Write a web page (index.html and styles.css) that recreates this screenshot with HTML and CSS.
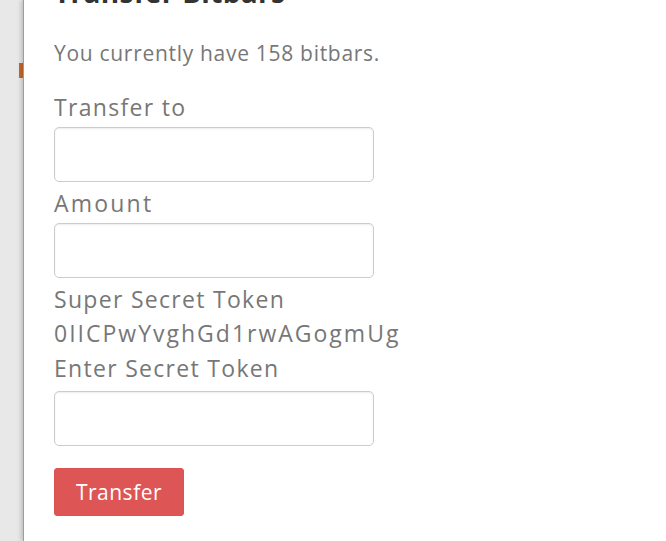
FILE: index.html
```html
<!DOCTYPE html>
<html lang="en">
<head>
<meta charset="utf-8">
<title>Transfer Bitbars</title>
<link rel="stylesheet" href="styles.css">
</head>
<body>
<div class="page">
  <div class="backdrop">
    <span class="behind-mark"></span>
  </div>
  <div class="panel">
    <h2 class="title">Transfer Bitbars</h2>
    <p class="intro">You currently have 158 bitbars.</p>
    <form class="form">
      <label class="label" for="to">Transfer to</label>
      <input class="field" id="to" type="text">
      <label class="label label-wide" for="amount">Amount</label>
      <input class="field" id="amount" type="text">
      <div class="label">Super Secret Token</div>
      <div class="label label-tall token">0IICPwYvghGd1rwAGogmUg</div>
      <label class="label label-tall" for="token">Enter Secret Token</label>
      <input class="field field-spaced" id="token" type="text">
      <div class="actions">
        <button class="btn" type="button">Transfer</button>
      </div>
    </form>
  </div>
</div>
</body>
</html>
```
FILE: styles.css
```css
html, body {
  margin: 0;
  padding: 0;
  height: 100%;
  overflow: hidden;
}
body {
  background: #e8e8e8;
  font-family: "Open Sans", "Liberation Sans", sans-serif;
  color: #777;
}
.page {
  display: flex;
  height: 100%;
}
.backdrop {
  width: 23px;
  flex: none;
  position: relative;
  background: #e8e8e8;
}
.behind-mark {
  position: absolute;
  left: 19px;
  top: 63px;
  width: 5px;
  height: 15px;
  background: #c9692c;
}
.panel {
  flex: 1;
  position: relative;
  z-index: 1;
  background: #fff;
  border-left: 1px solid #9d9d9d;
  box-shadow: -2px 0 4px rgba(0, 0, 0, 0.18);
  padding: 0 30px;
}
.title {
  margin: -25px 0 0;
  font-size: 28px;
  line-height: 34px;
  font-weight: 700;
  color: #333;
  letter-spacing: 0.3px;
}
.intro {
  margin: 27px 0 0;
  font-size: 21px;
  line-height: 34px;
  letter-spacing: 0.7px;
}
.form {
  display: flex;
  flex-direction: column;
  align-items: flex-start;
  margin-top: 20px;
}
.label {
  display: block;
  font-size: 23px;
  line-height: 34px;
  letter-spacing: 1.3px;
  color: #777;
}
.label-wide {
  letter-spacing: 2.2px;
}
.label-tall {
  line-height: 35px;
}
.token {
  letter-spacing: 2px;
}
.field {
  box-sizing: border-box;
  width: 320px;
  height: 55px;
  margin: 3px 0 4px;
  border: 1px solid #ccc;
  border-radius: 5px;
  box-shadow: inset 0 1px 2px rgba(0, 0, 0, 0.08);
  background: #fff;
  font: inherit;
  padding: 6px 12px;
}
.field-spaced {
  margin-top: 5px;
}
.actions {
  margin-top: 18px;
}
.btn {
  box-sizing: border-box;
  width: 130px;
  height: 48px;
  border: 1px solid #d9534f;
  border-radius: 3px;
  background: #dd5555;
  color: #fff;
  font-family: inherit;
  font-size: 21px;
  letter-spacing: 0.5px;
  padding: 0;
  cursor: pointer;
}
```
